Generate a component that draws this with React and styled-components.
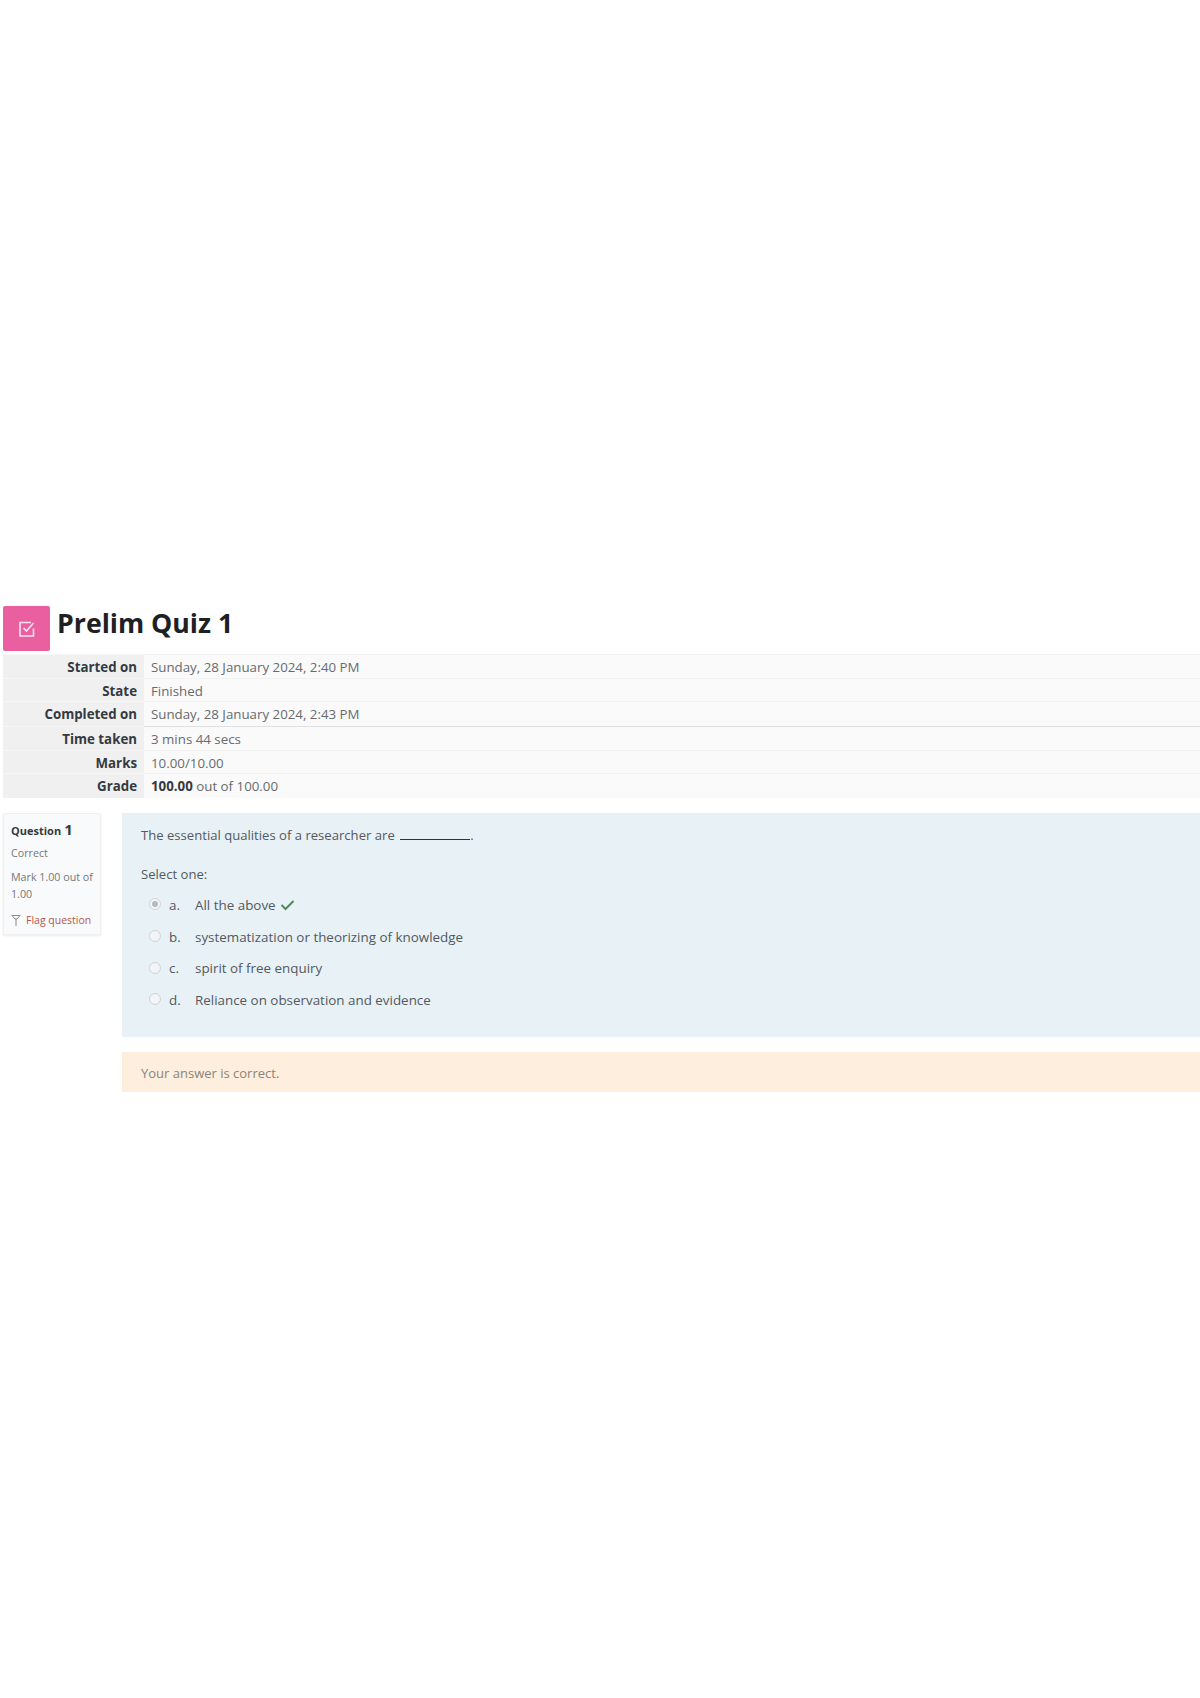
import React from 'react'
import styled, { createGlobalStyle } from 'styled-components'

const GlobalStyle = createGlobalStyle`
    html, body {
        margin: 0;
        padding: 0;
        background: #fff;
    }
    body {
        font-family: "Open Sans", "Noto Sans", "Liberation Sans", sans-serif;
        font-size: 13.3px;
        color: #4a4f55;
    }
`

const Page = styled.div`
    width: 1200px;
    height: 1698px;
    padding: 606px 0 0 3px;
    box-sizing: border-box;
    overflow: hidden;
`

const Header = styled.div`
    display: flex;
    align-items: flex-start;
    gap: 7px;
    height: 48px;
`

const IconBox = styled.div`
    width: 47px;
    height: 45px;
    background: #ea5f9f;
    border-radius: 2px;
    display: flex;
    align-items: center;
    justify-content: center;
`

const Title = styled.h1`
    margin: 0;
    font-size: 26.7px;
    line-height: 34px;
    font-weight: 700;
    color: #1d2125;
`

const Summary = styled.div`
    display: grid;
    grid-template-columns: 141px 1fr;
    width: 1197px;
`

const Label = styled.div`
    height: ${props => props.$height}px;
    line-height: 25px;
    box-sizing: border-box;
    padding-right: 7px;
    text-align: right;
    font-weight: 700;
    color: #343a40;
    background: #f0f0f0;
    border-top: 1px solid #f6f6f6;
`

const Value = styled.div`
    height: ${props => props.$height}px;
    line-height: 25px;
    box-sizing: border-box;
    padding-left: 7px;
    color: #666b70;
    background: #fafafa;
    border-top: 1px solid ${props => (props.$strong ? '#e0e0e0' : '#f2f2f2')};

    b {
        color: #343a40;
        font-weight: 700;
    }
`

const Question = styled.div`
    display: flex;
    align-items: flex-start;
    gap: 21px;
    margin-top: 15px;
`

const Info = styled.div`
    width: 98px;
    height: 122px;
    box-sizing: border-box;
    padding: 6px 7px;
    background: #f8fafc;
    border: 1px solid #f0f0f0;
    box-shadow: 0 1px 2px rgba(0, 0, 0, 0.08);
    font-size: 10.7px;
    line-height: 17px;
    color: #777;
`

const QuestionNo = styled.div`
    font-size: 11px;
    font-weight: 700;
    color: #343a40;
    line-height: 18px;
    margin-bottom: 5px;

    span {
        font-size: 15px;
        margin-left: 3px;
    }
`

const InfoLine = styled.div`
    margin-bottom: 7px;
    margin-right: -6px;
`

const Flag = styled.div`
    display: flex;
    align-items: center;
    gap: 5px;
    margin-top: 9px;
    color: #b5574f;
    font-size: 10.5px;
    white-space: nowrap;
`

const Content = styled.div`
    width: 1078px;
`

const Formulation = styled.div`
    height: 224px;
    box-sizing: border-box;
    padding: 11px 19px 0;
    background: #e8f1f6;
    color: #53595e;
`

const Prompt = styled.div`
    font-size: 13.1px;
    line-height: 20px;
    margin-bottom: 19px;
`

const Blank = styled.span`
    display: inline-block;
    width: 70px;
    border-bottom: 1px solid #333;
    margin-left: 2px;
    height: 15px;
`

const SelectOne = styled.div`
    font-size: 13.1px;
    line-height: 20px;
    margin-bottom: 5px;
`

const Option = styled.div`
    display: flex;
    align-items: center;
    height: 31.7px;
    padding-left: 8px;
    font-size: 13.4px;
`

const Radio = styled.span`
    width: 12px;
    height: 12px;
    box-sizing: border-box;
    border: 1px solid #cfd4d6;
    border-radius: 50%;
    background: #f1f5f7;
    display: flex;
    align-items: center;
    justify-content: center;
    margin-right: 8px;
    margin-top: -1px;

    &::after {
        content: "";
        display: ${props => (props.$checked ? 'block' : 'none')};
        width: 6px;
        height: 6px;
        border-radius: 50%;
        background: #b4bbbf;
    }
`

const Letter = styled.span`
    width: 26px;
`

const Feedback = styled.div`
    height: 40px;
    margin-top: 15px;
    box-sizing: border-box;
    padding: 0 19px;
    font-size: 13px;
    line-height: 42px;
    background: #fdeedd;
    color: #8a8577;
`

const options = [
    { letter: 'a.', text: 'All the above', checked: true },
    { letter: 'b.', text: 'systematization or theorizing of knowledge' },
    { letter: 'c.', text: 'spirit of free enquiry' },
    { letter: 'd.', text: 'Reliance on observation and evidence' }
]

const rows = [
    { label: 'Started on', height: 24, value: 'Sunday, 28 January 2024, 2:40 PM' },
    { label: 'State', height: 23, value: 'Finished' },
    { label: 'Completed on', height: 25, value: 'Sunday, 28 January 2024, 2:43 PM' },
    { label: 'Time taken', height: 24, value: '3 mins 44 secs', strong: true },
    { label: 'Marks', height: 23, value: '10.00/10.00' },
    { label: 'Grade', height: 25, value: <><b>100.00</b> out of 100.00</> }
]

export default function App() {
    return (
        <Page>
            <GlobalStyle />
            <Header>
                <IconBox>
                    <svg width="20" height="20" viewBox="0 0 20 20" fill="none" stroke="#fbe3ee" strokeWidth="1.6">
                        <path d="M16.5 9.5V17H3V3.5h11" />
                        <path d="M6.5 9l3 3 7-8" />
                    </svg>
                </IconBox>
                <Title>Prelim Quiz 1</Title>
            </Header>
            <Summary>
                {rows.map(row => (
                    <React.Fragment key={row.label}>
                        <Label $height={row.height}>{row.label}</Label>
                        <Value $height={row.height} $strong={row.strong}>{row.value}</Value>
                    </React.Fragment>
                ))}
            </Summary>
            <Question>
                <Info>
                    <QuestionNo>Question<span>1</span></QuestionNo>
                    <InfoLine>Correct</InfoLine>
                    <InfoLine>Mark 1.00 out of 1.00</InfoLine>
                    <Flag>
                        <svg width="10" height="13" viewBox="0 0 10 13" fill="none" stroke="#8a8a8a" strokeWidth="1">
                            <path d="M1 1.5h8L6 5H4z" />
                            <path d="M5 5v7" />
                        </svg>
                        Flag question
                    </Flag>
                </Info>
                <Content>
                    <Formulation>
                        <Prompt>The essential qualities of a researcher are <Blank />.</Prompt>
                        <SelectOne>Select one:</SelectOne>
                        {options.map(option => (
                            <Option key={option.letter}>
                                <Radio $checked={option.checked} />
                                <Letter>{option.letter}</Letter>
                                {option.text}
                                {option.checked && (
                                    <svg width="15" height="12" viewBox="0 0 15 12" fill="none" stroke="#4f8a5b" strokeWidth="2" style={{ marginLeft: 4 }}>
                                        <path d="M1.5 6l4 4 8-8" />
                                    </svg>
                                )}
                            </Option>
                        ))}
                    </Formulation>
                    <Feedback>Your answer is correct.</Feedback>
                </Content>
            </Question>
        </Page>
    )
}
